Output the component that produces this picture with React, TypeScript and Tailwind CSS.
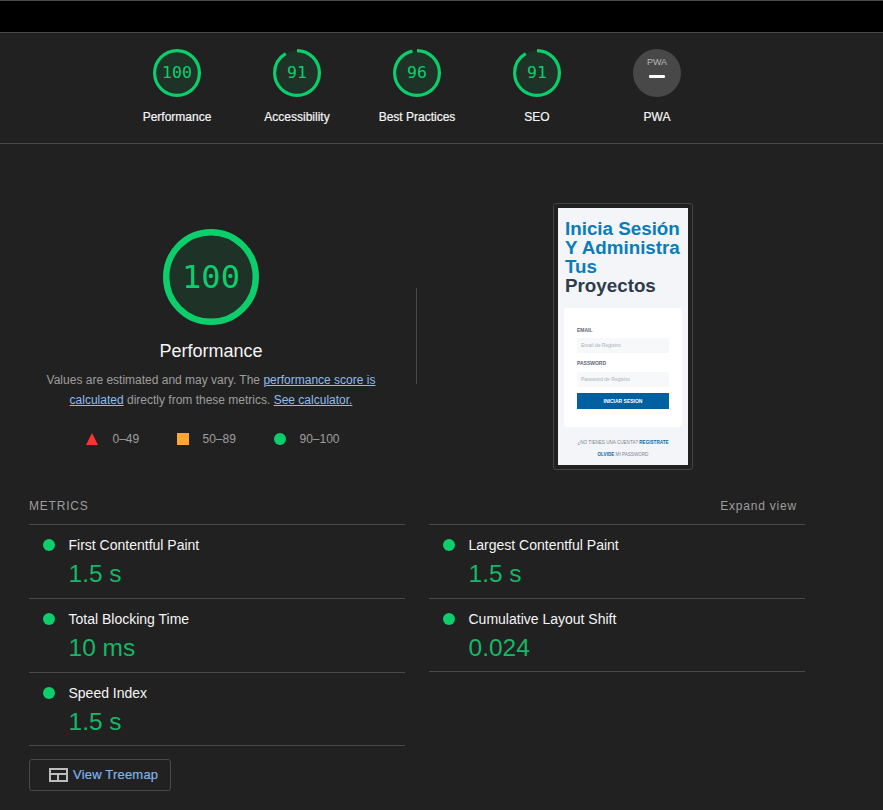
const GREEN = "#0cce6b";

function Gauge({ score, size, big }: { score: number; size: number; big?: boolean }) {
  const r = 56;
  const c = 2 * Math.PI * r;
  return (
    <div className="relative shrink-0" style={{ width: size, height: size }}>
      <svg viewBox="0 0 120 120" className="w-full h-full -rotate-90">
        <circle cx="60" cy="60" r="56" fill="rgba(12,206,107,0.1)" />
        <circle
          cx="60"
          cy="60"
          r={r}
          fill="none"
          stroke={GREEN}
          strokeWidth="8"
          strokeDasharray={`${(c * score) / 100} ${c}`}
        />
      </svg>
      <div
        className={`absolute inset-0 flex items-center justify-center text-[#0cce6b] font-['DejaVu_Sans_Mono',monospace] ${
          big ? "text-[32px]" : "text-[16.5px]"
        }`}
      >
        {score}
      </div>
    </div>
  );
}

function PwaGauge() {
  return (
    <div className="relative w-12 h-12 rounded-full bg-[#484848] flex flex-col items-center shrink-0">
      <span className="mt-[8px] text-[9px] leading-[10px] text-[#b8b8b8]">PWA</span>
      <span className="mt-[8px] w-4 h-[3px] bg-white rounded-[1px]" />
    </div>
  );
}

function TopItem({ label, children }: { label: string; children: React.ReactNode }) {
  return (
    <div className="w-[120px] flex flex-col items-center">
      {children}
      <div className="mt-[12px] text-[12px] leading-[16px] text-[#f5f5f5] [-webkit-text-stroke:0.2px_#f5f5f5]">{label}</div>
    </div>
  );
}

function Metric({ label, value, last }: { label: string; value: string; last?: boolean }) {
  return (
    <div className={`h-[74px] border-t border-[#4a4a4a] flex ${last ? "border-b" : ""}`}>
      <span className="ml-[14px] mt-[14px] w-3 h-3 rounded-full bg-[#0cce6b] shrink-0" />
      <div className="ml-[13.5px] flex flex-col">
        <div className="mt-[11px] text-[14px] leading-[18px] text-[#f5f5f5]">{label}</div>
        <div className="mt-[5px] text-[24.5px] leading-[30px] text-[#14b866]">{value}</div>
      </div>
    </div>
  );
}

function Shot() {
  return (
    <div className="w-[140px] h-[267px] border border-[#444444] rounded-[3px] p-[4px]">
      <div className="w-full h-full bg-[#f3f5f8] overflow-hidden px-[6px] pt-[11px] font-['Liberation_Sans',sans-serif]">
        <div className="ml-px text-[18.8px] leading-[19px] font-bold text-[#0a7cba] whitespace-nowrap">
          Inicia Sesión
          <br />
          Y Administra
          <br />
          Tus
          <br />
          <span className="text-[#2d3b4b]">Proyectos</span>
        </div>
        <div className="mt-[13px] h-[119px] bg-white rounded-[3px] px-[13px] pt-[19px]">
          <div className="text-[5px] leading-[6px] font-bold text-[#5b6675]">EMAIL</div>
          <div className="mt-[5px] h-[15px] bg-[#f6f8f9] rounded-[1px] pl-[4px] text-[5px] leading-[15px] text-[#a8b0b8]">
            Email de Registro
          </div>
          <div className="mt-[7px] text-[5px] leading-[6px] font-bold text-[#5b6675]">PASSWORD</div>
          <div className="mt-[6px] h-[15px] bg-[#f6f8f9] rounded-[1px] pl-[4px] text-[5px] leading-[15px] text-[#a8b0b8]">
            Password de Registro
          </div>
          <div className="mt-[6px] h-[16px] bg-[#01609f] text-white text-[5px] font-bold leading-[16px] text-center">
            INICIAR SESION
          </div>
        </div>
        <div className="mt-[13px] text-center text-[4.6px] leading-[6px] text-[#7a8592] whitespace-nowrap">
          ¿NO TIENES UNA CUENTA? <span className="font-bold text-[#0a6ba8]">REGISTRATE</span>
        </div>
        <div className="mt-[6px] text-center text-[4.6px] leading-[6px] text-[#7a8592] whitespace-nowrap">
          <span className="font-bold text-[#0a6ba8]">OLVIDE</span> MI PASSWORD
        </div>
      </div>
    </div>
  );
}

export default function App() {
  return (
    <div className="h-[810px] overflow-hidden bg-[#212121] font-['Liberation_Sans',Arial,sans-serif]">
      <div className="h-[33px] bg-black border-t border-b border-[#4a4a4a]" />
      <div className="w-[834px]">
        <div className="h-[111px] border-b border-[#4a4a4a] -mr-[49px] pt-[16px]">
          <div className="w-[834px] flex justify-center">
            <TopItem label="Performance"><Gauge score={100} size={48} /></TopItem>
            <TopItem label="Accessibility"><Gauge score={91} size={48} /></TopItem>
            <TopItem label="Best Practices"><Gauge score={96} size={48} /></TopItem>
            <TopItem label="SEO"><Gauge score={91} size={48} /></TopItem>
            <TopItem label="PWA"><PwaGauge /></TopItem>
          </div>
        </div>

        <div className="flex h-[352px]">
          <div className="w-[416px] pl-[29px] pr-[23px] pt-[85px] flex flex-col items-center">
            <Gauge score={100} size={96} big />
            <div className="mt-[15px] text-[18px] leading-[22px] text-[#f5f5f5]">Performance</div>
            <p className="mt-[8px] w-[364px] text-center text-[12px] leading-[20px] text-[#9e9e9e] whitespace-nowrap">
              Values are estimated and may vary. The{" "}
              <span className="text-[#8ebcf2] underline">performance score is</span>
              <br />
              <span className="text-[#8ebcf2] underline">calculated</span> directly from these metrics.{" "}
              <span className="text-[#8ebcf2] underline">See calculator.</span>
            </p>
            <div className="mt-[21px] w-[251px] flex items-center text-[12px] leading-[16px] text-[#9e9e9e] whitespace-nowrap">
              <span className="shrink-0 w-0 h-0 border-l-[6px] border-r-[6px] border-b-[12px] border-l-transparent border-r-transparent border-b-[#f33]" />
              <span className="shrink-0 ml-[15px] w-[50px]">0–49</span>
              <span className="shrink-0 ml-[14px] w-3 h-3 bg-[#ffa733]" />
              <span className="shrink-0 ml-[14px] w-[50px]">50–89</span>
              <span className="shrink-0 ml-[21px] w-3 h-3 rounded-full bg-[#0cce6b]" />
              <span className="shrink-0 ml-[14px]">90–100</span>
            </div>
          </div>
          <div className="w-px h-[96px] mt-[144px] bg-[#4a4a4a]" />
          <div className="flex-1 pt-[59px] pr-[5px] flex justify-center">
            <Shot />
          </div>
        </div>

        <div className="mx-[29px]">
          <div className="h-[28px] flex items-start justify-between text-[12px] leading-[20px] tracking-[0.8px] text-[#9e9e9e]">
            <span>METRICS</span>
            <span className="mr-[8px]">Expand view</span>
          </div>
          <div className="grid grid-cols-2 gap-x-6">
            <div>
              <Metric label="First Contentful Paint" value="1.5 s" />
              <Metric label="Total Blocking Time" value="10 ms" />
              <Metric label="Speed Index" value="1.5 s" last />
            </div>
            <div>
              <Metric label="Largest Contentful Paint" value="1.5 s" />
              <Metric label="Cumulative Layout Shift" value="0.024" last />
            </div>
          </div>
          <div className="mt-[13px] w-[142px] h-[32px] border border-[#4a4a4a] rounded-[3px] flex items-center pl-[19px]">
            <svg width="19" height="14" viewBox="0 0 19 14" className="shrink-0" fill="#bdbdbd">
              <path d="M0 0h19v14H0V0zm2 2v3h15V2H2zm0 5v5h6V7H2zm8 0v5h7V7h-7z" fillRule="evenodd" />
            </svg>
            <span className="ml-[5px] text-[13px] tracking-[0.2px] text-[#7fb4ec] whitespace-nowrap [-webkit-text-stroke:0.2px_#7fb4ec]">View Treemap</span>
          </div>
        </div>
      </div>
    </div>
  );
}
